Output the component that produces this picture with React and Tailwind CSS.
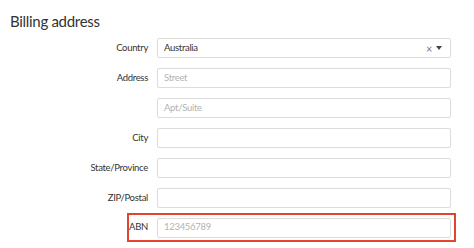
export default function App() {
  const rows = [
    { label: "Country", value: "Australia", select: true },
    { label: "Address", placeholder: "Street" },
    { label: "", placeholder: "Apt/Suite" },
    { label: "City" },
    { label: "State/Province" },
    { label: "ZIP/Postal" },
  ];

  return (
    <div className="w-[474px] h-[248px] bg-white text-[#333] font-['Lato',sans-serif] overflow-hidden">
      <h2 className="pl-[10px] pt-[11px] text-[15px] leading-[20px] tracking-[-0.3px] text-[#333]">Billing address</h2>

      <div className="mt-[7px] flex flex-col gap-[10px]">
        {rows.map((r, i) => (
          <div key={i} className="flex items-center h-[20px]">
            <label className="w-[148px] text-right text-[9.5px] tracking-[-0.3px] text-[#333]">{r.label}</label>
            <div className="ml-[9px] w-[294px] h-[20px] border border-[#dcdcdc] rounded-[2px] flex items-center pl-[6px] pr-[8px] text-[9.5px] tracking-[-0.3px]">
              {r.select ? (
                <>
                  <span className="flex-1 text-[#333]">{r.value}</span>
                  <span className="text-[#777] text-[11px] leading-none mr-[4px]">×</span>
                  <svg width="6" height="4" viewBox="0 0 6 4">
                    <path d="M0 0h6L3 4z" fill="#444" />
                  </svg>
                </>
              ) : (
                <span className="text-[#b3b3b3]">{r.placeholder}</span>
              )}
            </div>
          </div>
        ))}
      </div>

      <div className="mt-[5px] ml-[127px] w-[329px] h-[29px] border-2 border-[#e0462f] flex items-center">
        <label className="w-[19px] text-right text-[9.5px] tracking-[-0.3px] text-[#333]">ABN</label>
        <div className="ml-[9px] w-[294px] h-[20px] border border-[#dcdcdc] rounded-[2px] flex items-center px-[6px] text-[9.5px] tracking-[-0.3px] text-[#b3b3b3]">
          123456789
        </div>
      </div>
    </div>
  );
}
